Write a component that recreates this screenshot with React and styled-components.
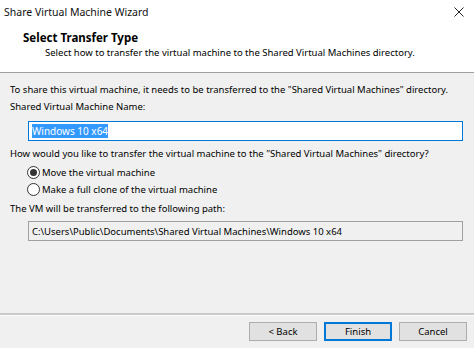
import React from 'react'
import styled, { createGlobalStyle } from 'styled-components'

const Global = createGlobalStyle`
  html, body {
    margin: 0;
    padding: 0;
    width: 474px;
    height: 348px;
    overflow: hidden;
    background: #f0f0f0;
  }
  * {
    box-sizing: border-box;
  }
`

const Window = styled.div`
  width: 474px;
  height: 348px;
  display: flex;
  flex-direction: column;
  background: #f0f0f0;
  color: #000;
  font-family: 'Noto Sans', 'Open Sans', sans-serif;
  font-size: 9.5px;
`

const TitleBar = styled.div`
  height: 24px;
  display: flex;
  align-items: center;
  justify-content: space-between;
  padding: 0 8px 0 4px;
  background: #fff;
  font-size: 10.5px;
  color: #111;
`

const CloseIcon = styled.svg`
  width: 10px;
  height: 10px;
  margin-right: 2px;
`

const Header = styled.div`
  height: 49px;
  background: #fff;
  border-bottom: 1px solid #a0a0a0;
  padding: 6px 0 0 23px;
  display: flex;
  flex-direction: column;
`

const HeaderTitle = styled.div`
  font-weight: bold;
  font-size: 11.5px;
  line-height: 15px;
`

const HeaderSub = styled.div`
  padding-left: 22px;
  line-height: 15px;
`

const Body = styled.div`
  flex: 1;
  padding: 9px 10px 0 10px;
  display: flex;
  flex-direction: column;
`

const Line = styled.div`
  line-height: 16px;
  margin-top: ${(p) => p.$gap || 0}px;
  white-space: nowrap;
`

const Field = styled.div`
  margin: ${(p) => p.$gap || 0}px 1px 0 18px;
  height: 20px;
  display: flex;
  align-items: center;
  padding: 0 3px;
  border: 1px solid ${(p) => (p.$focused ? '#0078d7' : '#a0a0a0')};
  background: ${(p) => (p.$readonly ? '#f0f0f0' : '#fff')};
  white-space: nowrap;
`

const Selected = styled.span`
  background: #3399ff;
  color: #fff;
  font-size: 10px;
  line-height: 14px;
`

const RadioRow = styled.label`
  display: flex;
  align-items: center;
  gap: 2px;
  height: 16px;
  margin: ${(p) => p.$gap || 0}px 0 0 17px;
`

const RadioCircle = styled.span`
  width: 13px;
  height: 13px;
  border-radius: 50%;
  border: 1px solid #333;
  background: #fff;
  display: flex;
  align-items: center;
  justify-content: center;

  &::after {
    content: '';
    width: 7px;
    height: 7px;
    border-radius: 50%;
    background: ${(p) => (p.$checked ? '#333' : 'transparent')};
  }
`

const Footer = styled.div`
  border-top: 2px solid #cacaca;
  box-shadow: inset 0 1px 0 #fff;
  height: 35px;
  padding: 7px 7px 0 0;
  display: flex;
  justify-content: flex-end;
  align-items: flex-start;
  gap: 7px;
`

const Button = styled.button`
  width: 68px;
  height: 19px;
  padding: 0;
  font-family: inherit;
  font-size: 9.5px;
  color: #000;
  background: #e1e1e1;
  border: ${(p) => (p.$primary ? '2px solid #0078d7' : '1px solid #adadad')};
`

export default function App() {
  return (
    <Window>
      <Global />
      <TitleBar>
        <span>Share Virtual Machine Wizard</span>
        <CloseIcon viewBox="0 0 10 10">
          <path d="M0.5 0.5 L9.5 9.5 M9.5 0.5 L0.5 9.5" stroke="#222" strokeWidth="1" />
        </CloseIcon>
      </TitleBar>
      <Header>
        <HeaderTitle>Select Transfer Type</HeaderTitle>
        <HeaderSub>Select how to transfer the virtual machine to the Shared Virtual Machines directory.</HeaderSub>
      </Header>
      <Body>
        <Line>To share this virtual machine, it needs to be transferred to the "Shared Virtual Machines" directory.</Line>
        <Line $gap={1}>Shared Virtual Machine Name:</Line>
        <Field $gap={6} $focused>
          <Selected>Windows 10 x64</Selected>
        </Field>
        <Line $gap={5}>How would you like to transfer the virtual machine to the "Shared Virtual Machines" directory?</Line>
        <RadioRow $gap={2}>
          <RadioCircle $checked />
          Move the virtual machine
        </RadioRow>
        <RadioRow $gap={1}>
          <RadioCircle />
          Make a full clone of the virtual machine
        </RadioRow>
        <Line $gap={4}>The VM will be transferred to the following path:</Line>
        <Field $gap={4} $readonly>
          C:\Users\Public\Documents\Shared Virtual Machines\Windows 10 x64
        </Field>
      </Body>
      <Footer>
        <Button>&lt; Back</Button>
        <Button $primary>Finish</Button>
        <Button>Cancel</Button>
      </Footer>
    </Window>
  )
}
